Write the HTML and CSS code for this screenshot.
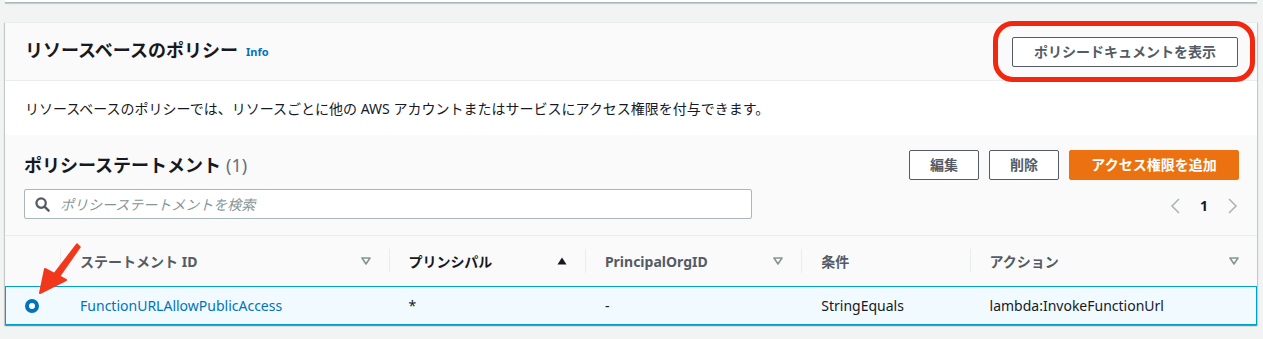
FILE: index.html
```html
<!DOCTYPE html>
<html lang="ja">
<head>
<meta charset="utf-8">
<link rel="stylesheet" href="styles.css">
</head>
<body>
<div class="page">
  <div class="prev-card"></div>
  <section class="card">
    <header class="card-head">
      <h2 class="title">リソースベースのポリシー <a class="info">Info</a></h2>
      <button class="btn btn-wide">ポリシードキュメントを表示</button>
    </header>
    <div class="desc">リソースベースのポリシーでは、リソースごとに他の AWS アカウントまたはサービスにアクセス権限を付与できます。</div>
    <div class="table-head">
      <div class="th-row">
        <h2 class="title">ポリシーステートメント <span class="count">(1)</span></h2>
        <div class="actions">
          <button class="btn">編集</button>
          <button class="btn">削除</button>
          <button class="btn btn-primary">アクセス権限を追加</button>
        </div>
      </div>
      <div class="th-row2">
        <label class="search">
          <svg class="search-icon" width="15" height="15" viewBox="0 0 16 16"><circle cx="6.5" cy="6.5" r="5" fill="none" stroke="#545b64" stroke-width="2.4"/><line x1="10.2" y1="10.2" x2="14.5" y2="14.5" stroke="#545b64" stroke-width="2.6" stroke-linecap="round"/></svg>
          <span class="placeholder">ポリシーステートメントを検索</span>
        </label>
        <div class="pager">
          <svg width="14" height="16" viewBox="0 0 14 16"><polyline points="10,1 3,8 10,15" fill="none" stroke="#aab7b8" stroke-width="1.6"/></svg>
          <span class="page-num">1</span>
          <svg width="14" height="16" viewBox="0 0 14 16"><polyline points="4,1 11,8 4,15" fill="none" stroke="#aab7b8" stroke-width="1.6"/></svg>
        </div>
      </div>
    </div>
    <table class="tbl">
      <colgroup>
        <col class="c0"><col class="c1"><col class="c2"><col class="c3"><col class="c4"><col class="c5">
      </colgroup>
      <thead>
        <tr>
          <th></th>
          <th><div class="th"><span>ステートメント ID</span><svg class="sort" width="10" height="8" viewBox="0 0 10 8"><polygon points="1,1 9,1 5,7" fill="none" stroke="#879596" stroke-width="1.6" stroke-linejoin="round"/></svg></div></th>
          <th><div class="th sorted"><span>プリンシパル</span><svg class="sort" width="10" height="8" viewBox="0 0 10 8"><polygon points="0.5,7.5 9.5,7.5 5,0.5" fill="#16191f"/></svg></div></th>
          <th><div class="th"><span>PrincipalOrgID</span><svg class="sort" width="10" height="8" viewBox="0 0 10 8"><polygon points="1,1 9,1 5,7" fill="none" stroke="#879596" stroke-width="1.6" stroke-linejoin="round"/></svg></div></th>
          <th><div class="th"><span>条件</span></div></th>
          <th><div class="th"><span>アクション</span><svg class="sort" width="10" height="8" viewBox="0 0 10 8"><polygon points="1,1 9,1 5,7" fill="none" stroke="#879596" stroke-width="1.6" stroke-linejoin="round"/></svg></div></th>
        </tr>
      </thead>
      <tbody>
        <tr class="selected">
          <td class="radio-cell"><span class="radio"></span></td>
          <td><a class="link">FunctionURLAllowPublicAccess</a></td>
          <td>*</td>
          <td>-</td>
          <td>StringEquals</td>
          <td>lambda:InvokeFunctionUrl</td>
        </tr>
      </tbody>
    </table>
  </section>
  <div class="highlight"></div>
  <svg class="arrow" width="60" height="70" viewBox="0 0 60 70">
    <polygon points="47,5 50,8 29,38 24,35" fill="#f2381c" stroke="#f2381c" stroke-width="1.5" stroke-linejoin="round"/>
    <polygon points="10,54 15,30 36,41" fill="#f2381c" stroke="#f2381c" stroke-width="2" stroke-linejoin="round"/>
  </svg>
</div>
</body>
</html>
```
FILE: styles.css
```css
* { box-sizing: border-box; }
html, body { margin: 0; padding: 0; }
body {
  background: #f2f3f3;
  font-family: "Noto Sans", "Noto Sans CJK JP", sans-serif;
  font-size: 14px;
  color: #16191f;
  width: 1263px;
  height: 339px;
  overflow: hidden;
}
.page { position: relative; }
.prev-card {
  height: 3px;
  margin: 0 6px 0 5px;
  background: #fff;
  border-bottom: 1px solid #aab7b8;
  box-shadow: 0 1px 1px rgba(0,28,36,0.2);
}
.card {
  margin: 19px 6px 0 5px;
  background: #fff;
  border-top: 1px solid #eaeded;
  box-shadow: 0 1px 1px 0 rgba(0,28,36,0.3), 1px 1px 1px 0 rgba(0,28,36,0.15), -1px 1px 1px 0 rgba(0,28,36,0.15);
}
.card-head {
  height: 58px;
  background: #fafafa;
  border-bottom: 1px solid #eaeded;
  padding: 0 19px 0 20px;
  display: flex;
  align-items: center;
  justify-content: space-between;
}
.title {
  margin: 0;
  font-size: 18px;
  font-weight: 700;
  line-height: 22px;
  color: #16191f;
  display: flex;
  align-items: baseline;
}
.info {
  font-size: 11px;
  font-weight: 700;
  color: #0073bb;
  margin-left: 8px;
  position: relative;
  top: -1px;
}
.count { font-weight: 400; color: #687078; margin-left: 5px; }
.btn {
  font-family: inherit;
  font-size: 14px;
  font-weight: 700;
  height: 30px;
  padding: 0 20px;
  background: #fff;
  color: #545b64;
  border: 1px solid #545b64;
  border-radius: 2px;
  line-height: 28px;
}
.btn-wide { width: 226px; padding: 0; }
.btn-primary {
  background: #ec7211;
  border-color: #ec7211;
  color: #fff;
  width: 170px;
  padding: 0;
}
.desc {
  height: 54px;
  padding: 0 20px;
  display: flex;
  align-items: center;
  line-height: 20px;
  background: #fff;
  padding-top: 2px;
}
.table-head {
  background: #fafafa;
  border-bottom: 1px solid #eaeded;
  padding: 14px 18px 0 19px;
  height: 101px;
}
.th-row {
  display: flex;
  align-items: center;
  justify-content: space-between;
  height: 32px;
}
.actions { display: flex; gap: 10px; }
.actions .btn:first-child { width: 70px; padding: 0; }
.actions .btn:nth-child(2) { width: 70px; padding: 0; }
.th-row2 {
  display: flex;
  align-items: center;
  justify-content: space-between;
  margin-top: 8px;
}
.search {
  width: 728px;
  height: 30px;
  border: 1px solid #aab7b8;
  border-radius: 2px;
  background: #fff;
  display: flex;
  align-items: center;
  padding-left: 10px;
  gap: 10px;
}
.placeholder { color: #879596; font-style: italic; font-size: 14px; }
.pager {
  display: flex;
  align-items: center;
  gap: 17px;
  padding-right: 0;
  padding-top: 3px;
}
.page-num { font-weight: 700; font-size: 14px; color: #16191f; }
.tbl {
  width: 100%;
  border-collapse: separate;
  border-spacing: 0;
  table-layout: fixed;
}
.c0 { width: 55px; }
.c1 { width: 328px; }
.c2 { width: 196px; }
.c3 { width: 216px; }
.c4 { width: 168px; }
.c5 { width: 287px; }
thead th {
  background: #fafafa;
  height: 50px;
  padding: 0;
  text-align: left;
  font-weight: 700;
  color: #545b64;
}
.th {
  height: 24px;
  border-left: 1px solid #eaeded;
  padding: 0 18px 0 19px;
  display: flex;
  align-items: center;
  justify-content: space-between;
}
.th.sorted { color: #16191f; }
tbody td {
  height: 39px;
  padding: 0 0 0 20px;
  background: #f1faff;
  border-top: 1px solid #00a1c9;
  border-bottom: 1px solid #00a1c9;
  color: #16191f;
}
tbody td:first-child { border-left: 1px solid #00a1c9; padding-left: 19px; }
tbody td:last-child { border-right: 1px solid #00a1c9; }
.radio {
  display: block;
  width: 14px;
  height: 14px;
  border-radius: 50%;
  border: 4.5px solid #0073bb;
  background: #fff;
}
.link { color: #0073bb; }
.highlight {
  position: absolute;
  left: 993px;
  top: 21px;
  width: 262px;
  height: 61px;
  border: 5px solid #f3260f;
  border-radius: 20px;
}
.arrow {
  position: absolute;
  left: 30px;
  top: 239px;
}
```
